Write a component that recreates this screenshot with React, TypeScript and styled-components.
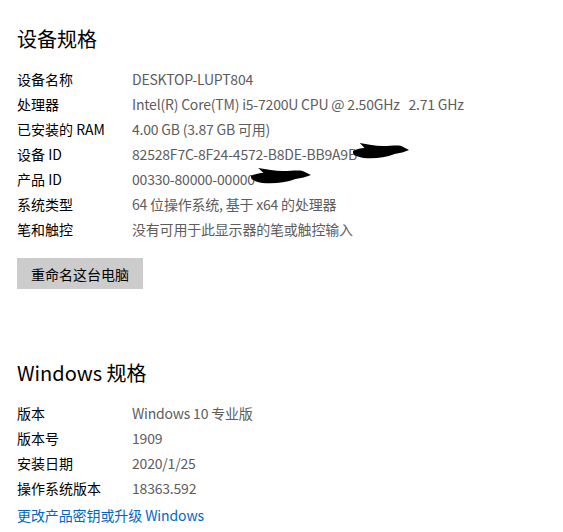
import React from "react";
import styled, { createGlobalStyle } from "styled-components";

const GlobalStyle = createGlobalStyle`
  html, body {
    margin: 0;
    padding: 0;
    background: #ffffff;
  }
  body {
    font-family: "Noto Sans CJK SC", "Noto Sans", sans-serif;
  }
`;

const Page = styled.div`
  padding: 24px 17px 0 17px;
  width: 563px;
  height: 532px;
  box-sizing: border-box;
  overflow: hidden;
`;

const Section = styled.section<{ gap?: number }>`
  margin-top: ${(p) => p.gap ?? 0}px;
`;

const Title = styled.h2`
  margin: 0 0 12px 0;
  font-size: 20px;
  font-weight: 400;
  line-height: 30px;
  color: #000;
`;

const Specs = styled.div`
  display: grid;
  grid-template-columns: 115px 1fr;
  grid-auto-rows: 25px;
  align-items: center;
  font-size: 14px;
`;

const Label = styled.div`
  color: #000;
  white-space: nowrap;
`;

const Value = styled.div`
  color: #5d5d5d;
  white-space: pre;
  letter-spacing: -0.2px;
  display: flex;
  align-items: center;
`;

const Redact = styled.svg`
  flex: none;
  margin-left: -5px;
  margin-top: -5px;
`;

const RenameButton = styled.button`
  margin-top: 17px;
  height: 31px;
  width: 126px;
  border: none;
  background: #cccccc;
  font-family: inherit;
  font-size: 14px;
  color: #000;
  padding: 0;
  cursor: pointer;
`;

const Link = styled.a`
  display: block;
  margin-top: 3px;
  color: #0067c0;
  font-size: 14px;
  letter-spacing: -0.1px;
  text-decoration: none;
  line-height: 25px;
`;

type Spec = { label: string; value: string; redact?: number };

const device: Spec[] = [
  { label: "设备名称", value: "DESKTOP-LUPT804" },
  { label: "处理器", value: "Intel(R) Core(TM) i5-7200U CPU @ 2.50GHz   2.71 GHz" },
  { label: "已安装的 RAM", value: "4.00 GB (3.87 GB 可用)" },
  { label: "设备 ID", value: "82528F7C-8F24-4572-B8DE-BB9A9B", redact: 58 },
  { label: "产品 ID", value: "00330-80000-00000", redact: 62 },
  { label: "系统类型", value: "64 位操作系统, 基于 x64 的处理器" },
  { label: "笔和触控", value: "没有可用于此显示器的笔或触控输入" },
];

const windows: Spec[] = [
  { label: "版本", value: "Windows 10 专业版" },
  { label: "版本号", value: "1909" },
  { label: "安装日期", value: "2020/1/25" },
  { label: "操作系统版本", value: "18363.592" },
];

function Scribble({ width }: { width: number }) {
  return (
    <Redact width={width} height={18} viewBox="0 0 60 18" preserveAspectRatio="none">
      <path
        d="M1 9 C5 7 9 6 13 6 L8 1 C16 2 24 4 32 4 C40 4 46 3 51 4 L59 8 C55 10 49 11 44 12 C34 16 22 17 12 16 C6 15 2 13 1 11 Z"
        fill="#000"
      />
    </Redact>
  );
}

function SpecList({ items }: { items: Spec[] }) {
  return (
    <Specs>
      {items.map((s) => (
        <React.Fragment key={s.label}>
          <Label>{s.label}</Label>
          <Value>
            {s.value}
            {s.redact && <Scribble width={s.redact} />}
          </Value>
        </React.Fragment>
      ))}
    </Specs>
  );
}

export default function App() {
  return (
    <>
      <GlobalStyle />
      <Page>
        <Section>
          <Title>设备规格</Title>
          <SpecList items={device} />
          <RenameButton>重命名这台电脑</RenameButton>
        </Section>
        <Section gap={69}>
          <Title>Windows 规格</Title>
          <SpecList items={windows} />
          <Link href="#">更改产品密钥或升级 Windows</Link>
        </Section>
      </Page>
    </>
  );
}
